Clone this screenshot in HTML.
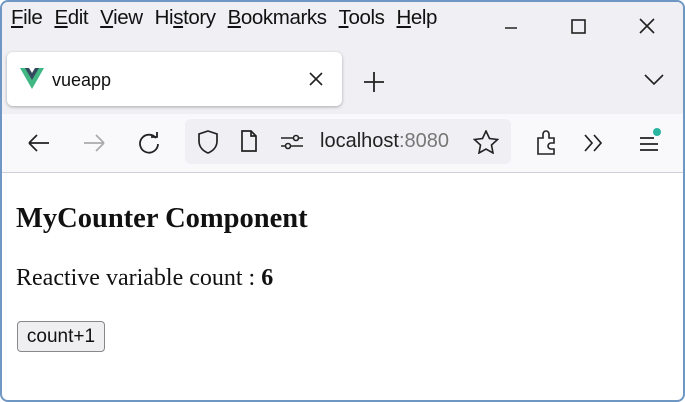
<!DOCTYPE html>
<html><head><style>
*{margin:0;padding:0;box-sizing:border-box}
body{width:685px;height:402px;overflow:hidden;background:#fff;font-family:"Liberation Sans",sans-serif;position:relative}
.win{position:absolute;left:0;top:0;width:685px;height:402px;border:2px solid #6f97c4;border-radius:8px;overflow:hidden;background:#fff}
.top{position:absolute;left:0;top:0;width:100%;height:170px;background:#f0f0f4}
.menu{position:absolute;top:4px;left:9px;font-size:20.5px;color:#111;letter-spacing:-0.4px}
.menu span{margin-right:12px}
.menu u{text-decoration:underline}
.tab{position:absolute;left:5px;top:50px;width:335px;height:54px;background:#fff;border-radius:6px;box-shadow:0 1px 3px rgba(0,0,0,.3)}
.toolbar{position:absolute;left:0;top:112px;width:100%;height:58px;background:#f9f9fb}
.url{position:absolute;left:183px;top:5px;width:326px;height:45px;background:#f0f0f4;border-radius:6px}
.sep{position:absolute;left:0;top:170px;width:100%;height:1px;background:#cfcfd8}
svg{position:absolute}
h3{position:absolute;left:14px;top:201px;font:bold 28.5px "Liberation Serif",serif;color:#111;white-space:nowrap}
p{position:absolute;left:14px;top:263px;font:24px "Liberation Serif",serif;color:#111;white-space:nowrap}
button{position:absolute;left:15px;top:319px;width:88px;height:31px;font:19px "Liberation Sans",sans-serif;background:#efeff2;border:1px solid #888;border-radius:4px;color:#111}
</style></head><body>
<div class="win">
<div class="top">
<div class="menu"><span><u>F</u>ile</span><span><u>E</u>dit</span><span><u>V</u>iew</span><span>Hi<u>s</u>tory</span><span><u>B</u>ookmarks</span><span><u>T</u>ools</span><span><u>H</u>elp</span></div>
<svg style="left:495px;top:10px" width="170" height="30" stroke="#222" stroke-width="1.6" fill="none"><path d="M8 16h12"/><rect x="75" y="8" width="13" height="13"/><path d="M143 7l14 14M157 7l-14 14"/></svg>
<div class="tab">
<svg style="left:13px;top:16px" width="24" height="22"><path d="M0 0h6l6 10 6-10h6L12 21z" fill="#41b883"/><path d="M5 0h4l3 5 3-5h4L12 12z" fill="#35495e"/></svg>
<div style="position:absolute;left:45px;top:18px;font-size:18px;color:#111">vueapp</div>
<svg style="left:302px;top:20px" width="14" height="14" stroke="#222" stroke-width="1.6"><path d="M1 1l12 12M13 1L1 13"/></svg>
</div>
<svg style="left:360px;top:68px" width="24" height="24" stroke="#222" stroke-width="1.8"><path d="M12 2v20M2 12h20"/></svg>
<svg style="left:641px;top:70px" width="22" height="16" stroke="#222" stroke-width="1.6" fill="none"><path d="M2 3l9 9 9-9"/></svg>
<div class="toolbar">
<svg style="left:25px;top:19px" width="24" height="20" stroke="#222" stroke-width="1.7" fill="none"><path d="M2 10h20M2 10l8-8M2 10l8 8"/></svg>
<svg style="left:80px;top:19px" width="24" height="20" stroke="#aaa" stroke-width="1.7" fill="none"><path d="M2 10h20M22 10l-8-8M22 10l-8 8"/></svg>
<svg style="left:135px;top:17px" width="24" height="24" stroke="#222" stroke-width="1.8" fill="none"><path d="M19 7A9 9 0 1 0 21 13"/><path d="M14 6h6V1"/></svg>
<div class="url">
<svg style="left:12px;top:11px" width="22" height="24" stroke="#222" stroke-width="1.7" fill="none"><path d="M11 1l9 3v7c0 6-4 10-9 12C6 21 2 17 2 11V4z"/></svg>
<svg style="left:55px;top:11px" width="18" height="22" stroke="#222" stroke-width="1.7" fill="none"><path d="M2 1h9l5 5v15H2z M11 1v5h5"/></svg>
<svg style="left:95px;top:14px" width="24" height="18" stroke="#222" stroke-width="1.6" fill="none"><path d="M1 5h12M18 5h5M1 13h5M11 13h12"/><circle cx="16" cy="5" r="2.5"/><circle cx="8" cy="13" r="2.5"/></svg>
<div style="position:absolute;left:135px;top:11px;font-size:20px;color:#222">localhost<span style="color:#777">:8080</span></div>
<svg style="left:288px;top:11px" width="26" height="24" stroke="#222" stroke-width="1.6" fill="none"><path d="M13 1l3.5 7.5 8 1-6 5.5 1.5 8-7-4-7 4 1.5-8-6-5.5 8-1z"/></svg>
</div>
<svg style="left:533px;top:16px" width="24" height="26" stroke="#222" stroke-width="1.6" fill="none"><path d="M3 8h5V4a3 3 0 0 1 6 0v4h5v5h-3a3 3 0 0 0 0 6h3v5H3z"/></svg>
<svg style="left:580px;top:19px" width="24" height="20" stroke="#222" stroke-width="1.7" fill="none"><path d="M3 2l7 8-7 8M12 2l7 8-7 8"/></svg>
<svg style="left:635px;top:12px" width="30" height="28"><g stroke="#222" stroke-width="1.7"><path d="M3 12h14M3 18h18M3 24h18"/></g><circle cx="20" cy="6" r="4" fill="#2ab5a0"/></svg>
</div>
</div>
<div class="sep"></div>
<h3>MyCounter Component</h3>
<p>Reactive variable count : <b>6</b></p>
<button>count+1</button>
</div>
</body></html>
